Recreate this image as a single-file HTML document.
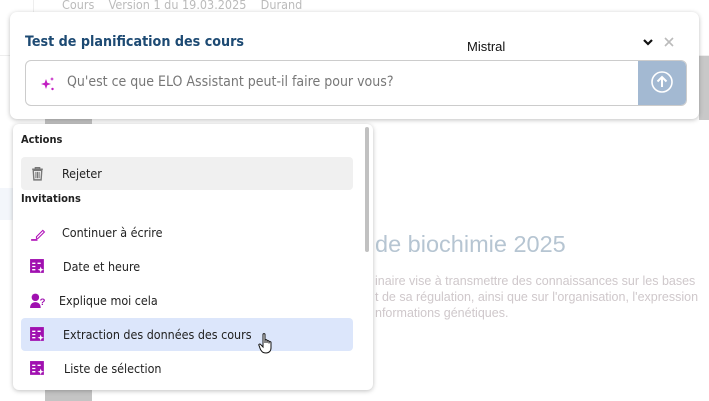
<!DOCTYPE html>
<html><head><meta charset="utf-8"><style>
*{box-sizing:border-box;margin:0;padding:0}
body{width:709px;height:401px;background:#fff;position:relative;overflow:hidden;font-family:"Liberation Sans",sans-serif}
.abs{position:absolute}
.fira{font-family:"DejaVu Sans Condensed","Liberation Sans",sans-serif}
.row{position:absolute;left:21px;width:332px;height:33px;border-radius:4px;font-size:12.4px;color:#222;display:flex;align-items:center}
.row .ic{position:absolute;left:8px;top:8px;width:17px;height:17px}
.row span{position:absolute;top:9px}
.h{position:absolute;left:21px;font-size:11px;font-weight:bold;color:#222}
</style></head><body>
<div class="abs" style="left:33px;top:0;width:1px;height:55px;background:#eee"></div>
<div class="abs fira" style="left:62px;top:-3px;font-size:12.5px;color:#bbb;white-space:nowrap">Cours&nbsp;&nbsp;&nbsp;&nbsp;Version 1 du 19.03.2025&nbsp;&nbsp;&nbsp;&nbsp;Durand</div>
<div class="abs" style="left:0;top:55px;width:709px;height:1px;background:#eee"></div>
<div class="abs" style="left:699px;top:56px;width:10px;height:64px;background:#c8c8c8"></div>
<div class="abs" style="left:0;top:188px;width:20px;height:32px;background:#f3f6fb"></div>
<div class="abs" style="left:45px;top:118px;width:47px;height:6px;background:#c4c4c4"></div>
<div class="abs" style="left:45px;top:389px;width:47px;height:12px;background:#c4c4c4"></div>
<div class="abs" style="left:375px;top:231px;font-size:23.5px;color:#b6c5d2;white-space:nowrap">de biochimie 2025</div>
<div class="abs" style="left:375px;top:273px;font-size:12.5px;line-height:16px;color:#cfc8cb;white-space:nowrap">inaire vise à transmettre des connaissances sur les bases<br>t de sa régulation, ainsi que sur l'organisation, l'expression<br>nformations génétiques.</div>
<div class="abs" style="left:10px;top:12px;width:689px;height:107px;background:#fff;border-radius:7px;box-shadow:0 1px 5px rgba(0,0,0,.25)"></div>
<div class="abs fira" style="left:25px;top:34px;font-size:14.2px;font-weight:bold;color:#1d4a73">Test de planification des cours</div>
<div class="abs" style="left:467px;top:39px;font-size:13px;color:#111">Mistral</div>
<svg class="abs" style="left:642px;top:37px" width="12" height="10" viewBox="0 0 12 10"><path d="M2 3l4 4 4-4" stroke="#111" stroke-width="2.2" fill="none"/></svg>
<svg class="abs" style="left:663px;top:36px" width="12" height="12" viewBox="0 0 12 12"><path d="M2 2l8 8M10 2l-8 8" stroke="#bbb" stroke-width="1.6"/></svg>
<div class="abs" style="left:25px;top:60px;width:662px;height:46px;border:1px solid #ccc;border-radius:6px;overflow:hidden">
 <div class="abs" style="right:0;top:0;width:48px;height:46px;background:#a3b9d2"></div>
</div>
<svg class="abs" style="left:650px;top:70px" width="24" height="24" viewBox="0 0 24 24"><circle cx="12" cy="12" r="10" stroke="#fff" stroke-width="1.6" fill="none"/><path d="M12 17V7M7.5 11.5L12 7l4.5 4.5" stroke="#fff" stroke-width="2" fill="none"/></svg>
<svg class="abs" style="left:39px;top:75px" width="18" height="18" viewBox="0 0 18 18"><path d="M7 4l1.3 3.7L12 9l-3.7 1.3L7 14l-1.3-3.7L2 9l3.7-1.3z" fill="#c21fc2"/><path d="M13 2l.6 1.4L15 4l-1.4.6L13 6l-.6-1.4L11 4l1.4-.6z" fill="#c21fc2"/><circle cx="13.5" cy="14" r="1.2" fill="#c21fc2"/></svg>
<div class="abs fira" style="left:67px;top:74px;font-size:14px;color:#777">Qu'est ce que ELO Assistant peut-il faire pour vous?</div>
<div class="abs fira" style="left:13px;top:124px;width:360px;height:266px;background:#fff;border-radius:6px;box-shadow:0 1px 5px rgba(0,0,0,.25)"></div>
<div class="abs" style="left:365px;top:127px;width:4px;height:125px;background:#c1c1c1;border-radius:2px"></div>
<div class="fira">
<div class="h" style="top:133px">Actions</div>
<div class="row" style="top:157px;background:#f0f0f0"><svg class="ic" viewBox="0 0 16 16"><path d="M3 4h10M6 4V2.5h4V4M4 5h8l-.6 9H4.6z" stroke="#777" stroke-width="1.3" fill="none"/><path d="M6.5 6.5v6M8 6.5v6M9.5 6.5v6" stroke="#777" stroke-width="1"/></svg><span style="left:41px">Rejeter</span></div>
<div class="h" style="top:192px">Invitations</div>
<div class="row" style="top:216px"><svg class="ic" viewBox="0 0 16 16"><path d="M2 15h6" stroke="#b010b8" stroke-width="1.6"/><path d="M7 12l6-6 1.5 1.5-6 6H7z" stroke="#b010b8" stroke-width="1" fill="none"/></svg><span style="left:41px">Continuer à écrire</span></div>
<div class="row" style="top:250px"><svg class="ic" viewBox="0 0 16 16"><rect x="1" y="1" width="13" height="13" fill="#a010b0"/><path d="M3 5h3M3 8h3M3 11h3M8 5h3" stroke="#fff" stroke-width="1.2"/><path d="M11 8l.8 2.2L14 11l-2.2.8L11 14l-.8-2.2L8 11l2.2-.8z" fill="#fff"/></svg><span style="left:42px">Date et heure</span></div>
<div class="row" style="top:284px"><svg class="ic" viewBox="0 0 16 16"><circle cx="6" cy="5" r="3.5" fill="#a010b0"/><path d="M1 15c0-4 2.5-5.5 5-5.5s5 1.5 5 5.5z" fill="#a010b0"/><text x="10" y="12" font-size="9" font-weight="bold" fill="#a010b0" font-family="Liberation Sans">?</text></svg><span style="left:38px">Explique moi cela</span></div>
<div class="row" style="top:318px;background:#dce6fb"><svg class="ic" viewBox="0 0 16 16"><rect x="1" y="1" width="13" height="13" fill="#a010b0"/><path d="M3 5h3M3 8h3M3 11h3M8 5h3" stroke="#fff" stroke-width="1.2"/><path d="M11 8l.8 2.2L14 11l-2.2.8L11 14l-.8-2.2L8 11l2.2-.8z" fill="#fff"/></svg><span style="left:42px">Extraction des données des cours</span></div>
<div class="row" style="top:352px"><svg class="ic" viewBox="0 0 16 16"><rect x="1" y="1" width="13" height="13" fill="#a010b0"/><path d="M3 5h3M3 8h3M3 11h3M8 5h3" stroke="#fff" stroke-width="1.2"/><path d="M11 8l.8 2.2L14 11l-2.2.8L11 14l-.8-2.2L8 11l2.2-.8z" fill="#fff"/></svg><span style="left:43px">Liste de sélection</span></div>
</div>
<svg class="abs" style="left:258px;top:332px" width="20" height="24" viewBox="0 0 20 24"><path d="M5 2.5c0-1.2 2-1.2 2 0V11V8.5c0-1.2 2-1.2 2 0V11V9.5c0-1.2 2-1.2 2 0V11.5V10.5c0-1.2 2-1.2 2 0V16c0 3-2 5-5 5s-4-1-5.5-3.5L1 13.5c-.7-1.1.8-2 1.6-1.1L5 15z" fill="#fff" stroke="#111" stroke-width="1"/></svg>
</body></html>
